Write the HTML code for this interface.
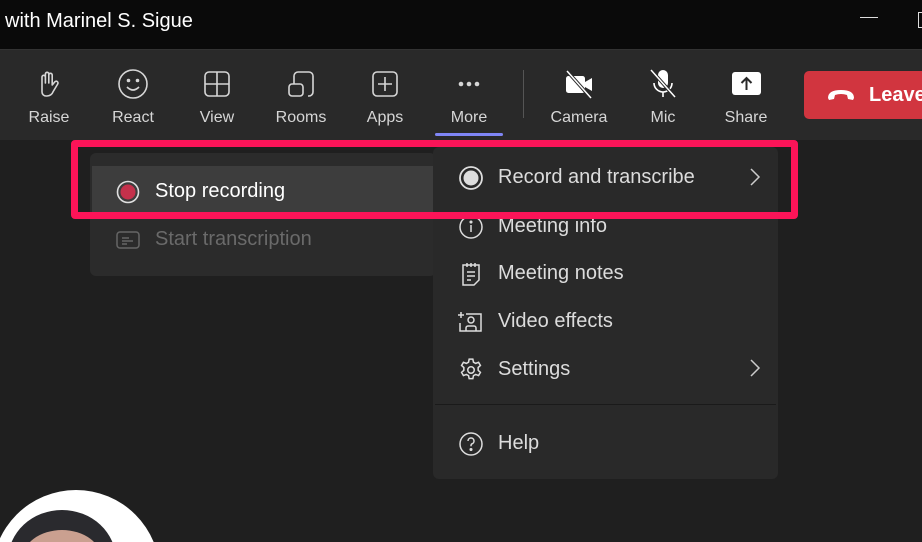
<!DOCTYPE html>
<html style="overflow:hidden;width:922px;height:542px"><head><meta charset="utf-8"><style>
*{margin:0;padding:0;box-sizing:border-box}
body{width:922px;height:542px;overflow:hidden;background:#1f1f1f;font-family:"Segoe UI","Liberation Sans",sans-serif;position:relative;color:#fff}
.abs{position:absolute}
.title{left:0;top:0;width:922px;height:49px;background:#0a0a0a}
.tb{left:0;top:49px;width:922px;height:91px;background:#292929;border-top:1px solid #333}
.btn{position:absolute;top:67px;width:84px;text-align:center;font-size:16px;color:#d6d6d6}
.btn svg{display:block;margin:0 auto 8px;width:34px;height:34px}
.btn span{display:block}
.menu{background:#292929;border-radius:6px}
.t{position:absolute;font-size:20px;color:#dcdcdc;white-space:nowrap}
</style></head><body>
<div class="abs title"></div>
<div class="abs" style="left:5px;top:10px;font-size:20px;color:#fff">with Marinel S. Sigue</div>
<div class="abs" style="left:860px;top:17px;width:18px;height:1px;background:#ddd"></div>
<div class="abs" style="left:918px;top:12px;width:4px;height:16px;border:1px solid #ddd;border-right:none"></div>
<div class="abs tb"></div>

<div class="btn" style="left:7px"><svg viewBox="0 0 34 34" fill="none" stroke="#d6d6d6" stroke-width="1.6" stroke-linejoin="round"><path d="M10 18V10a1.7 1.7 0 0 1 3.4 0v6V7a1.7 1.7 0 0 1 3.4 0v9V8a1.7 1.7 0 0 1 3.4 0v10l2.5-3a1.8 1.8 0 0 1 3 2l-4.5 7.5A7 7 0 0 1 15 29h-1a4 4 0 0 1-4-4z"/></svg><span>Raise</span></div>
<div class="btn" style="left:91px"><svg viewBox="0 0 34 34" fill="none" stroke="#d6d6d6" stroke-width="1.6"><circle cx="17" cy="17" r="14"/><circle cx="12.5" cy="13.5" r="1" fill="#d6d6d6"/><circle cx="21.5" cy="13.5" r="1" fill="#d6d6d6"/><path d="M11 20q6 6 12 0"/></svg><span>React</span></div>
<div class="btn" style="left:175px"><svg viewBox="0 0 34 34" fill="none" stroke="#d6d6d6" stroke-width="1.6"><rect x="5" y="5" width="24" height="24" rx="4"/><path d="M17 5v24M5 17h24"/></svg><span>View</span></div>
<div class="btn" style="left:259px"><svg viewBox="0 0 34 34" fill="none" stroke="#d6d6d6" stroke-width="1.6"><path d="M10 17V9a4 4 0 0 1 4-4h11a4 4 0 0 1 4 4v16a4 4 0 0 1-4 4h-1"/><rect x="5" y="17" width="14" height="12" rx="3"/></svg><span>Rooms</span></div>
<div class="btn" style="left:343px"><svg viewBox="0 0 34 34" fill="none" stroke="#d6d6d6" stroke-width="1.6"><rect x="5" y="5" width="24" height="24" rx="4"/><path d="M17 10v14M10 17h14"/></svg><span>Apps</span></div>
<div class="btn" style="left:427px"><svg viewBox="0 0 34 34" fill="#d6d6d6"><circle cx="9" cy="17" r="2.3"/><circle cx="17" cy="17" r="2.3"/><circle cx="25" cy="17" r="2.3"/></svg><span>More</span></div>
<div class="abs" style="left:435px;top:133px;width:68px;height:3px;border-radius:2px;background:#7f85f5"></div>
<div class="abs" style="left:523px;top:70px;width:1px;height:48px;background:#555"></div>
<div class="btn" style="left:537px"><svg viewBox="0 0 34 34"><rect x="4" y="9" width="19" height="17" rx="2.5" fill="#fff"/><path d="M23 15l7-4v13l-7-4z" fill="#fff"/><path d="M5 4l24 27" stroke="#292929" stroke-width="3.5"/><path d="M5 4l24 27" stroke="#fff" stroke-width="1.5"/></svg><span>Camera</span></div>
<div class="btn" style="left:621px"><svg viewBox="0 0 34 34" fill="none"><rect x="12" y="3" width="10" height="18" rx="5" fill="#fff"/><path d="M8 16a9 9 0 0 0 18 0M17 25v5" stroke="#fff" stroke-width="1.6"/><path d="M5 3l24 27" stroke="#292929" stroke-width="3.5"/><path d="M5 3l24 27" stroke="#fff" stroke-width="1.5"/></svg><span>Mic</span></div>
<div class="btn" style="left:704px"><svg viewBox="0 0 34 34"><rect x="3" y="5" width="29" height="23" rx="3" fill="#fff"/><path d="M17.5 23V11M12.5 16l5-5 5 5" stroke="#292929" stroke-width="2" fill="none"/></svg><span>Share</span></div>
<div class="abs" style="left:804px;top:71px;width:118px;height:48px;background:#d1353f;border-radius:5px 0 0 5px"></div>
<svg class="abs" style="left:826px;top:88px" width="30" height="14" viewBox="0 0 30 14"><path d="M2 10q0-8 13-8t13 8l-1 2-5-1-1-4q-6-2-12 0l-1 4-5 1z" fill="#fff"/></svg>
<div class="abs" style="left:869px;top:84px;font-size:20px;font-weight:bold">Leave</div>

<div class="abs menu" style="left:90px;top:153px;width:346px;height:123px;background:#2b2b2b"></div>
<div class="abs" style="left:92px;top:166px;width:342px;height:46px;background:#3d3d3d"></div>
<svg class="abs" style="left:116px;top:180px" width="24" height="24" viewBox="0 0 24 24"><circle cx="12" cy="12" r="10.5" fill="none" stroke="#e0e0e0" stroke-width="1.6"/><circle cx="12" cy="12" r="7.5" fill="#c4314b"/></svg>
<div class="t" style="left:155px;top:180px;color:#fff">Stop recording</div>
<svg class="abs" style="left:116px;top:230px" width="24" height="20" viewBox="0 0 24 20" fill="none" stroke="#666" stroke-width="1.5"><rect x="1" y="2" width="22" height="16" rx="3"/><path d="M6 8h7M6 11h11M6 14h5"/></svg>
<div class="t" style="left:155px;top:228px;color:#6a6a6a">Start transcription</div>

<div class="abs menu" style="left:433px;top:147px;width:345px;height:332px"></div>
<svg class="abs" style="left:458px;top:165px" width="26" height="26" viewBox="0 0 26 26"><circle cx="13" cy="13" r="11" fill="none" stroke="#ddd" stroke-width="1.8"/><circle cx="13" cy="13" r="7.5" fill="#ddd"/></svg>
<div class="t" style="left:498px;top:166px">Record and transcribe</div>
<svg class="abs" style="left:748px;top:167px" width="14" height="20" viewBox="0 0 14 20"><path d="M3 2l8 8-8 8" fill="none" stroke="#ccc" stroke-width="1.5"/></svg>
<svg class="abs" style="left:458px;top:214px" width="26" height="26" viewBox="0 0 26 26" fill="none" stroke="#ddd" stroke-width="1.5"><circle cx="13" cy="13" r="11"/><path d="M13 11v7"/><circle cx="13" cy="8" r=".8" fill="#ddd"/></svg>
<div class="t" style="left:498px;top:215px">Meeting info</div>
<svg class="abs" style="left:460px;top:261px" width="22" height="26" viewBox="0 0 22 26" fill="none" stroke="#ddd" stroke-width="1.5"><path d="M3 4h16v15l-5 5H3z"/><path d="M7 2v4M11 2v4M15 2v4M7 11h8M7 15h8M7 19h4"/></svg>
<div class="t" style="left:498px;top:262px">Meeting notes</div>
<svg class="abs" style="left:456px;top:310px" width="28" height="24" viewBox="0 0 28 24" fill="none" stroke="#ddd" stroke-width="1.5"><path d="M10 4h15v17H4v-8"/><circle cx="15" cy="10" r="3"/><path d="M10 21v-3a2 2 0 0 1 2-2h6a2 2 0 0 1 2 2v3M5 2v6M2 5h6"/></svg>
<div class="t" style="left:498px;top:310px">Video effects</div>
<svg class="abs" style="left:458px;top:357px" width="26" height="26" viewBox="0 0 24 24" fill="none" stroke="#ddd" stroke-width="1.4"><circle cx="12" cy="12" r="3"/><path d="M10.3 2h3.4l.6 2.8 2 1.1 2.7-1 1.7 2.9-2.1 1.9v2.6l2.1 1.9-1.7 2.9-2.7-1-2 1.1-.6 2.8h-3.4l-.6-2.8-2-1.1-2.7 1-1.7-2.9 2.1-1.9V9.7L3.3 7.8 5 4.9l2.7 1 2-1.1z"/></svg>
<div class="t" style="left:498px;top:358px">Settings</div>
<svg class="abs" style="left:748px;top:358px" width="14" height="20" viewBox="0 0 14 20"><path d="M3 2l8 8-8 8" fill="none" stroke="#ccc" stroke-width="1.5"/></svg>
<div class="abs" style="left:435px;top:404px;width:341px;height:1px;background:#1a1a1a"></div>
<svg class="abs" style="left:458px;top:431px" width="26" height="26" viewBox="0 0 26 26" fill="none" stroke="#ddd" stroke-width="1.5"><circle cx="13" cy="13" r="11"/><path d="M10 10a3 3 0 1 1 4 2.8c-.8.4-1 1-1 2v.5"/><circle cx="13" cy="18.5" r=".8" fill="#ddd"/></svg>
<div class="t" style="left:498px;top:432px">Help</div>

<div class="abs" style="left:71px;top:140px;width:727px;height:79px;border:7px solid #fb1458;border-radius:4px"></div>

<svg class="abs" style="left:0;top:480px" width="200" height="62" viewBox="0 0 200 62">
<circle cx="76" cy="94" r="84" fill="#fff"/>
<ellipse cx="62" cy="80" rx="54" ry="50" fill="#2a2a2e"/>
<ellipse cx="62" cy="80" rx="40" ry="30" fill="#caa090"/>
</svg>
</body></html>
